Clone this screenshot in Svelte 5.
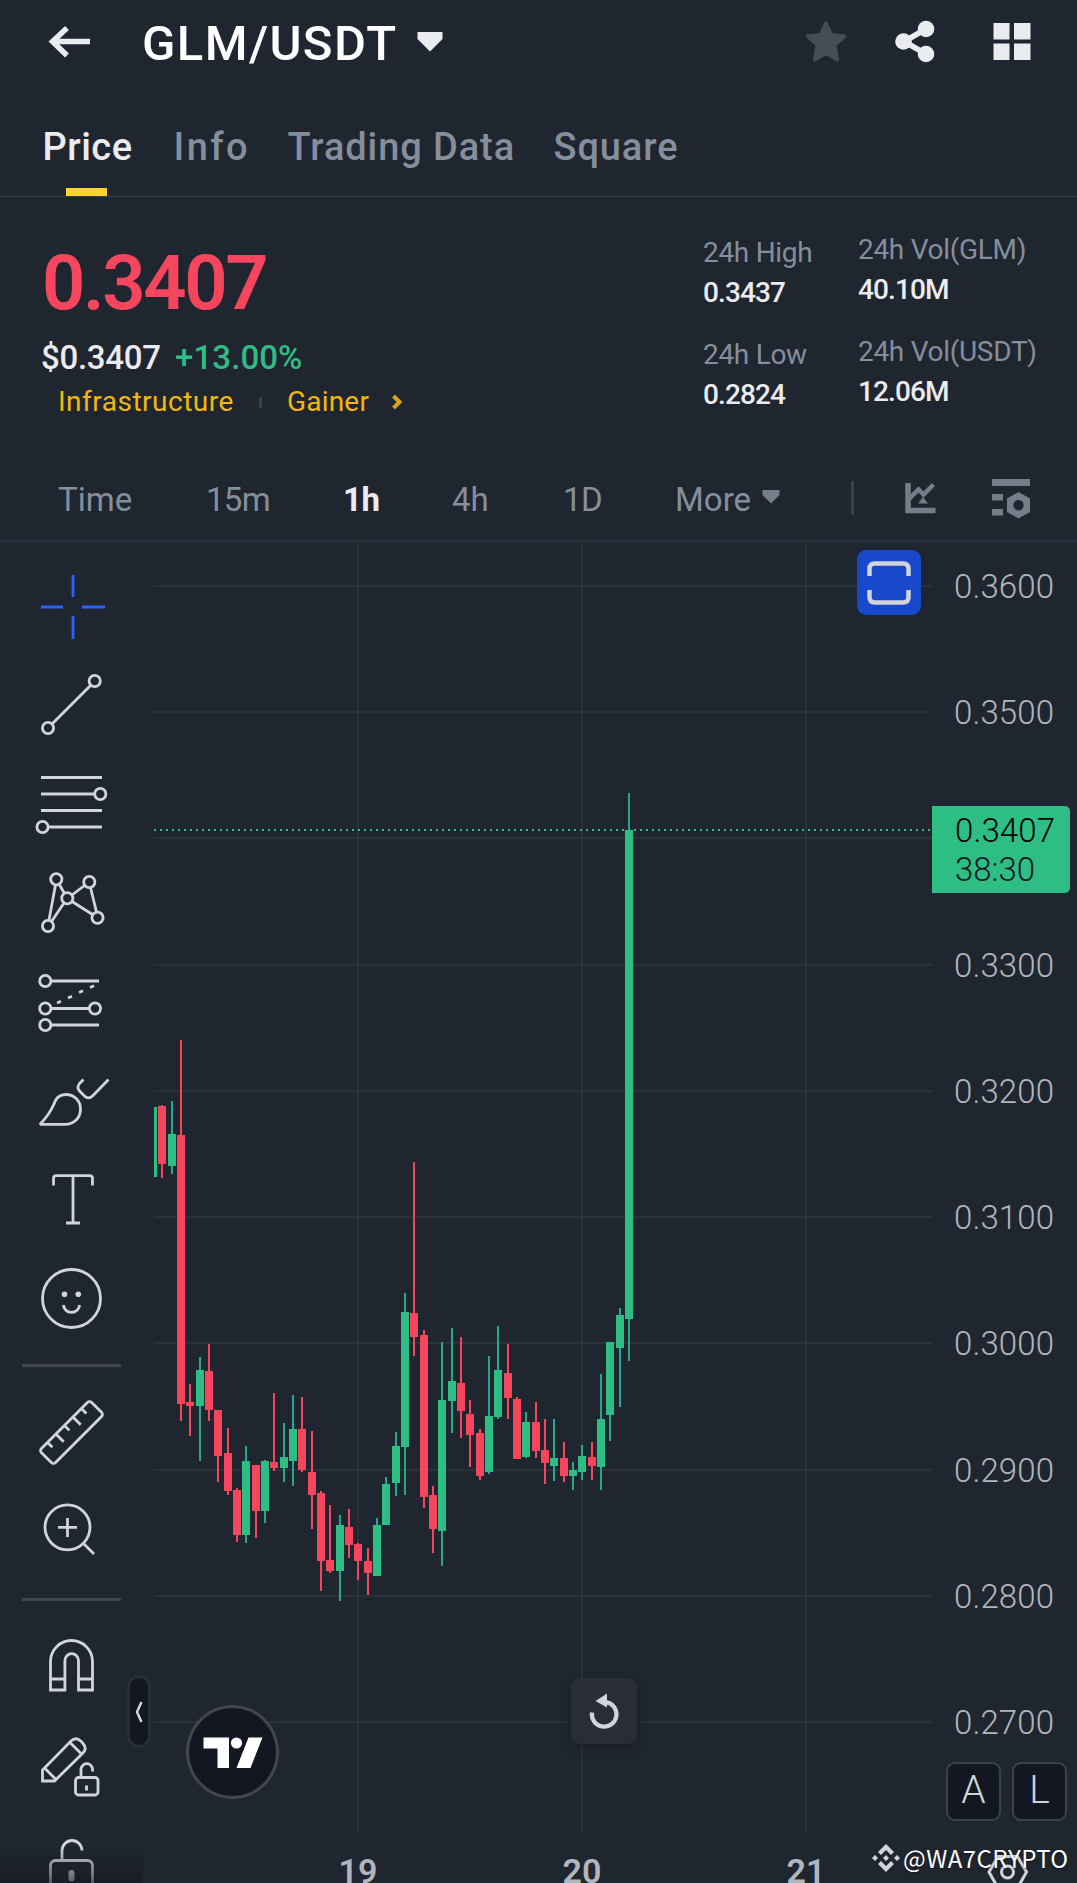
<script lang="ts">
  type Candle = [dir: 'up' | 'down', high: number, top: number, bottom: number, low: number];

  const tabs = ['Price', 'Info', 'Trading Data', 'Square'];
  const intervals = ['Time', '15m', '1h', '4h', '1D', 'More'];
  const stats = [
    [{ label: '24h High', value: '0.3437' }, { label: '24h Low', value: '0.2824' }],
    [{ label: '24h Vol(GLM)', value: '40.10M' }, { label: '24h Vol(USDT)', value: '12.06M' }],
  ];

  let tab = $state('Price');
  let interval = $state('1h');

  // price axis: one step of 0.01 is 126.22px
  const STEP = 126.22;
  const rows = ['0.3600', '0.3500', '0.3400', '0.3300', '0.3200', '0.3100', '0.3000', '0.2900', '0.2800', '0.2700']
    .map((label, i) => ({ label, y: Math.round(586 + i * STEP) }));
  const days = [{ label: '19', x: 358 }, { label: '20', x: 582 }, { label: '21', x: 806 }];

  // hourly bars, 24 to a day column; index 22 is on the "19" line
  const candles: Candle[] = [
    ['up', 1107, 1107, 1177, 1177], ['down', 1105, 1106, 1164, 1178], ['up', 1101, 1134, 1166, 1174],
    ['down', 1040, 1135, 1404, 1421], ['down', 1384, 1402, 1406, 1436], ['up', 1357, 1370, 1406, 1461],
    ['down', 1344, 1371, 1410, 1421], ['down', 1410, 1410, 1456, 1482], ['down', 1428, 1453, 1491, 1495],
    ['down', 1488, 1490, 1535, 1542], ['up', 1446, 1461, 1535, 1543], ['down', 1465, 1465, 1511, 1538],
    ['up', 1460, 1461, 1511, 1523], ['down', 1393, 1462, 1468, 1471], ['up', 1423, 1457, 1468, 1482],
    ['up', 1395, 1429, 1461, 1486], ['down', 1397, 1429, 1470, 1472], ['down', 1431, 1472, 1495, 1529],
    ['down', 1491, 1493, 1561, 1591], ['down', 1505, 1560, 1571, 1573], ['up', 1515, 1525, 1571, 1601],
    ['down', 1509, 1527, 1545, 1558], ['down', 1543, 1544, 1561, 1580], ['down', 1548, 1561, 1573, 1595],
    ['up', 1518, 1525, 1576, 1576], ['up', 1477, 1484, 1525, 1525], ['up', 1432, 1446, 1483, 1496],
    ['up', 1293, 1312, 1447, 1495], ['down', 1162, 1313, 1337, 1356], ['down', 1330, 1335, 1497, 1508],
    ['down', 1486, 1495, 1529, 1553], ['up', 1342, 1400, 1531, 1566], ['up', 1328, 1381, 1401, 1433],
    ['down', 1337, 1383, 1411, 1438], ['down', 1400, 1414, 1435, 1467], ['down', 1429, 1433, 1476, 1480],
    ['up', 1356, 1416, 1472, 1474], ['up', 1326, 1370, 1417, 1419], ['down', 1344, 1373, 1398, 1419],
    ['down', 1397, 1399, 1459, 1459], ['up', 1412, 1422, 1457, 1458], ['down', 1402, 1422, 1451, 1458],
    ['down', 1419, 1450, 1463, 1484], ['up', 1419, 1458, 1466, 1481], ['down', 1442, 1458, 1476, 1482],
    ['up', 1462, 1470, 1476, 1490], ['up', 1445, 1456, 1472, 1480], ['down', 1442, 1457, 1466, 1480],
    ['up', 1374, 1419, 1467, 1490], ['up', 1342, 1342, 1415, 1441], ['up', 1308, 1315, 1348, 1407],
    ['up', 793, 830, 1319, 1361],
  ];
  const barX = (i: number) => Math.ceil(358 + ((i - 22) * 28) / 3 - 0.01);
</script>

<div class="app">
  <header>
    <svg class="back" width="110" height="88"><path d="M67 28 52.5 41.5 67 55.5M53 41.5H90" /></svg>
    <h1>GLM/USDT</h1>
    <svg class="caret" width="26" height="88"><path d="M.5 32h25v7L13 51.5.5 39z" /></svg>
    <div class="actions">
      <svg width="42" height="88">
        <path class="star" d="M21 23.5 26.2 35 39 36.2 29.3 45.2 32.2 59.5 21 52.8 9.8 59.5 12.7 45.2 3 36.2 15.8 35z" />
      </svg>
      <svg width="40" height="88">
        <path d="M31 29 9 41.5 31 54" fill="none" stroke="#eaecef" stroke-width="5.5" />
        <circle cx="31" cy="29" r="8.3" /><circle cx="8.5" cy="41.5" r="8.3" /><circle cx="31" cy="54" r="8.3" />
      </svg>
      <svg width="38" height="88">
        <path d="M.5 23h16v16.5h-16zM21 23h16.5v16.5h-16.5zM.5 43.5h16v16.5h-16zM21 43.5h16.5v16.5h-16.5z" />
      </svg>
    </div>
  </header>

  <nav class="tabs">
    {#each tabs as name}
      <button class:active={tab === name} onclick={() => (tab = name)}>{name}</button>
    {/each}
  </nav>

  <section class="ticker">
    <div class="quote">
      <div class="price">0.3407</div>
      <div class="sub"><span class="usd">$0.3407</span><span class="change">+13.00%</span></div>
      <div class="tags">
        <span class="infra">Infrastructure</span>
        <i></i>
        <span class="gainer">Gainer</span>
        <svg width="12" height="16"><path d="M2.5 2 8.5 8 2.5 14" /></svg>
      </div>
    </div>
    {#each stats as column, i}
      <dl class:wide={i === 1}>
        {#each column as { label, value }}
          <div><dt>{label}</dt><dd>{value}</dd></div>
        {/each}
      </dl>
    {/each}
  </section>

  <nav class="intervals">
    {#each intervals as name}
      <button class:active={interval === name} onclick={() => (interval = name)}>
        {name}
        {#if name === 'More'}<svg width="18" height="14"><path d="M.5 0h17v5L9 13.5.5 5z" /></svg>{/if}
      </button>
    {/each}
    <i></i>
    <svg class="indicator" width="31" height="32">
      <path d="M3 1V28.5H30.5" stroke-width="5.5" />
      <path d="M4 17 13.5 7.5 18.5 12.5 28.5 2.5" stroke-width="4.5" />
      <path class="solid" d="M18 15 23 21.5H13z" />
    </svg>
    <svg class="settings" width="39" height="40">
      <path d="M0 0h38v7H0zM0 15h11v6.5H0zM0 30h11v6.5H0z" />
      <path fill-rule="evenodd" d="M26.5 13 38 19.5V33L26.5 39.5 15 33V19.5zM26.5 21a5.2 5.2 0 1 0 0 10.4 5.2 5.2 0 0 0 0-10.4z" />
    </svg>
  </nav>

  <main>
    <aside>
      <svg class="cross"><path d="M73 17V39M73 58V81M41 49H63M82 49H105" /></svg>
      <svg><path d="M52.5 66.5 90.5 28.5" /><circle cx="94.7" cy="24" r="5.6" /><circle cx="48" cy="71" r="5.6" /></svg>
      <svg>
        <path d="M41 21.5H102M41 38H94.5M41 54.5H102M48.5 71H102" />
        <circle cx="100.3" cy="38" r="5.6" /><circle cx="42.5" cy="71" r="5.6" />
      </svg>
      <svg>
        <path d="M55.5 30 49 65M59 29 64.5 38.5M72 40 84.5 30.5M90.5 32.5 96.5 57M72 46.5 92.5 59.5M64 48 51.5 66.5" />
        <circle cx="56.3" cy="24.3" r="5.6" /><circle cx="89.3" cy="27" r="5.6" /><circle cx="67.3" cy="43.3" r="5.6" />
        <circle cx="97.5" cy="62.7" r="5.6" /><circle cx="48" cy="71" r="5.6" />
      </svg>
      <svg>
        <path d="M51 27H99M51 54.5H89.5M51 71H99" />
        <path d="M57 49 61 47.3M68 44 72 42.3M79 38.5 83 36.8M90 33.5 94 31.8" />
        <circle cx="45.3" cy="27" r="5.6" /><circle cx="45.3" cy="54.5" r="5.6" />
        <circle cx="95" cy="54.5" r="5.6" /><circle cx="45.3" cy="71" r="5.6" />
      </svg>
      <svg>
        <path stroke-linejoin="bevel" d="M40 71.3C46 65 50 60 53.5 52 55.5 45 59.5 41.5 66 41.5 74.5 41.5 80.5 48 80.5 56 80.5 65 74 71.3 65 71.3Z" />
        <path d="M108.5 26.5 93 42.5C90 45.5 87 45.5 84.5 43L80 38.5C77.5 36 77.5 33 79.5 30.5L83.5 26.5" />
      </svg>
      <svg><path d="M53.5 33.5V26.5Q53.5 23.7 56.5 23.7H89.5Q92.5 23.7 92.5 26.5V33.5M73 23.7V71M66 71H80" /></svg>
      <svg>
        <circle cx="71.5" cy="47.5" r="29" /><path d="M63.5 54A8 7.3 0 0 0 79.5 54" />
        <circle class="dot" cx="64.5" cy="43.3" r="2.8" /><circle class="dot" cx="78.3" cy="43.3" r="2.8" />
      </svg>
      <hr />
      <svg>
        <g transform="translate(71.5 49.5) rotate(-45)">
          <rect x="-35.5" y="-10" width="71" height="20" rx="3" />
          <path d="M-24-10v7M-12-10V1M0-10v7M12-10V1M24-10v7" />
        </g>
      </svg>
      <svg><circle cx="67.5" cy="45.3" r="22.5" /><path d="M58 45.3H77M67.5 36V55M83.5 61.5 94 72" /></svg>
      <hr />
      <svg>
        <path d="M50.500 73V44.500a21 21 0 0 1 42 0V73H78.500V43.500a6.800 6.800 0 0 0-13.600 0V73zM50.500 62H65M78.500 62H92.500" />
      </svg>
      <svg>
        <path d="M42.5 65V54L71 25Q76 20.5 81 25.2L83 27.5Q87.5 32.5 83 37L54.5 65zM45 52.5 56 63.5M70 26.5 81.5 38" />
        <path d="M81 61V53.5a5.8 5.8 0 0 1 11.6 0V55.5M86.5 69.5V74.5" />
        <rect x="75.5" y="61.5" width="22.5" height="17.5" rx="3" />
      </svg>
      <svg class="last">
        <path d="M62 45V35.5a10 10 0 0 1 20 0" /><rect x="50.5" y="45.5" width="42" height="36" rx="5" />
        <path d="M71.5 58V63.5" stroke-width="6" stroke-linecap="round" />
      </svg>
      <div class="fade"></div>
    </aside>

    <div class="chart">
      <svg width="949" height="1344" viewBox="128 539 949 1344">
        <g class="grid">
          {#each rows as { y }}<rect x="154" y={y - 1} width="778" height="2" />{/each}
          {#each days as { x }}<rect x={x - 1} y="540" width="2" height="1292" />{/each}
        </g>
        <line class="last-price" x1="154" x2="932" y1="830" y2="830" />
        <clipPath id="plot"><rect x="154" y="539" width="778" height="1293" /></clipPath>
        <g clip-path="url(#plot)">
          {#each candles as [dir, high, top, bottom, low], i}
            <g class={dir}>
              <rect class="wick" x={barX(i) - 1} y={high} width="2" height={low - high} />
              <rect x={barX(i) - 4} y={top} width="8" height={bottom - top} />
            </g>
          {/each}
        </g>
        <g class="axis">
          {#each rows as { label, y }}
            {#if label !== '0.3400'}<text x="954" y={y + 12.4} textLength="100">{label}</text>{/if}
          {/each}
          {#each days as { label, x }}<text class="day" {x} y="1883">{label}</text>{/each}
        </g>
        <path class="tag" d="M932 806H1065a5 5 0 0 1 5 5V888a5 5 0 0 1-5 5H932z" />
        <text class="tag-price" x="955" y="842" textLength="100">0.3407</text>
        <text class="tag-time" x="955" y="881" textLength="80">38:30</text>
        <g class="hex"><path d="M998 1856.500H1017.500L1026.500 1872 1017.500 1888H998L989 1872z" /><circle cx="1007.500" cy="1872" r="6" /></g>
      </svg>

      <button class="fullscreen" aria-label="Full screen">
        <svg width="44" height="44"><path d="M2.5 15V8Q2.5 2.5 8 2.5H36Q41.5 2.5 41.5 8V15M2.5 29V36Q2.5 41.5 8 41.5H36Q41.5 41.5 41.5 36V29" /></svg>
      </button>
      <button class="collapse" aria-label="Hide toolbar">
        <svg width="8" height="22"><path d="M6.5 1 2 11 6.5 21" /></svg>
      </button>
      <div class="tv">
        <svg width="60" height="32"><path d="M.5.5H26V31H14.5V11.5H.5zM45.5.5H59.5L47.5 31H33.5z" /><circle cx="33.5" cy="6" r="5.6" /></svg>
      </div>
      <button class="reset" aria-label="Reset chart">
        <svg width="32" height="40"><path d="M4 20.5A12.3 12.3 0 1 0 18 10.2" /><path class="head" d="M7.5 9 19 1.5V15.5z" /></svg>
      </button>
      <div class="scale"><button>A</button><button>L</button></div>
      <div class="handle">
        <svg width="28" height="28" viewBox="0 0 28 28">
          <path d="M14 0 22 8 19 11 14 6 9 11 6 8zM14 28 22 20 19 17 14 22 9 17 6 20zM14 11 17 14 14 17 11 14zM3 11 6 14 3 17 0 14zM25 11 28 14 25 17 22 14z" />
        </svg>
        <span>@WA7CRYPTO</span>
      </div>
    </div>
  </main>
</div>

<style>
  :global(body){margin:0;background:#202630}
  .app{width:1077px;height:1883px;overflow:hidden;display:flex;flex-direction:column;background:#202630;color:#eaecef;font-family:Roboto,"Noto Sans",sans-serif}
  button{padding:0;border:0;background:none;color:inherit;font:inherit;letter-spacing:inherit;text-align:left}
  svg{display:block;flex:none;fill:#eaecef}

  header{display:flex;height:88px}
  .back{margin-right:32px}
  .back path{fill:none;stroke:#eaecef;stroke-width:5.5}
  h1{width:275px;margin:0;color:#fff;font-size:49px;font-weight:500;line-height:88px;letter-spacing:1.4px}
  .actions{display:flex;gap:48px;margin-left:362px}
  .actions svg:last-child{margin-left:10px}
  .star{fill:#474d57;stroke:#474d57;stroke-width:4;stroke-linejoin:round}

  .tabs{display:flex;box-sizing:border-box;height:109px;padding:10px 0 0 42.5px;border-bottom:1px solid #3a414b;color:#848e9c;font-size:38px;font-weight:500;line-height:98px;letter-spacing:.9px}
  .tabs button{position:relative;width:131px}
  .tabs button:nth-child(2){width:114px;letter-spacing:2.4px}
  .tabs button:nth-child(3){width:266px}
  .tabs button:first-child{letter-spacing:.5px}
  .tabs .active{color:#eaecef}
  .tabs .active::after{content:"";position:absolute;left:23.500px;bottom:0;width:41px;height:8px;background:#fcd535}

  .ticker{display:flex;height:263px}
  .quote{width:661px;padding:40px 0 0 42px}
  .price{height:92px;color:#f6465d;font-size:76px;font-weight:600;line-height:92px;letter-spacing:-2.4px}
  .sub{display:flex;margin-top:9px;font-size:33px;font-weight:500;line-height:40px}
  .usd{width:134px;margin-left:-1px;letter-spacing:-.3px}
  .change{color:#2ebd85;letter-spacing:.1px}
  .tags{display:flex;align-items:center;margin:4px 0 0 16px;color:#f0b90b;font-size:28px;line-height:40px}
  .infra{width:201px;letter-spacing:.5px}
  .tags i{width:3px;height:11px;margin-right:25px;background:#3a414b}
  .gainer{width:104px;letter-spacing:.2px}
  .tags path{fill:none;stroke:#d9a514;stroke-width:4}
  dl{display:flex;flex-direction:column;gap:22px;width:155px;margin:36px 0 0;font-size:28px;line-height:40px;white-space:nowrap;letter-spacing:-.3px}
  dl.wide{margin-top:33px}
  dt{color:#848e9c}
  dd{margin:0;font-weight:500;letter-spacing:-.9px}

  .intervals{display:flex;align-items:center;box-sizing:border-box;height:79px;padding-left:58px;color:#848e9c;font-size:33px}
  .intervals button{width:148px}
  .intervals button:nth-child(2){width:137px;letter-spacing:-.7px}
  .intervals button:nth-child(3){width:109px;letter-spacing:-.5px}
  .intervals button:nth-child(4){width:111px}
  .intervals button:nth-child(5){width:112px;letter-spacing:-.5px}
  .intervals button:nth-child(6){display:flex;align-items:center;justify-content:space-between;width:105px;margin-right:71px}
  .intervals .active{color:#eaecef;font-weight:700}
  .intervals svg{fill:#767c88}
  .intervals button svg{margin-top:-5px}
  .intervals i{width:3px;height:34px;margin:-4px 51px 0 0;background:#3a414b}
  .indicator{margin:-4px 56px 0 0}
  .indicator path{fill:none;stroke:#767c88}
  .indicator .solid{fill:#767c88;stroke:none}
  .settings{margin-top:-2px}

  main{display:flex;box-sizing:border-box;height:1344px;background:linear-gradient(#262c37 4px,transparent 4px)}
  aside{position:relative;width:128px;height:1325px;padding-top:19px}
  aside svg{width:128px;height:99px;fill:none;stroke:#d1d4dc;stroke-width:2.8}
  aside .last{height:68px}
  aside .cross{stroke:#2962ff}
  aside .dot{fill:#d1d4dc;stroke:none}
  hr{width:99px;height:3px;margin:14px 0 16px 22px;border:0;background:#434651}
  hr:nth-of-type(2){margin:17px 0 16px 22px}
  .fade{position:absolute;left:0;bottom:0;width:143px;height:38px;background:linear-gradient(transparent,#131722a0)}

  .chart{position:relative;width:949px}
  .grid{fill:#2b313b}
  .last-price{stroke:#2ebd85;stroke-width:2;stroke-dasharray:2 4}
  .up{fill:#2ebd85}
  .up .wick{fill:#26a68c}
  .down{fill:#f6465d}
  .axis{fill:#b2b5be;font-size:33px;font-weight:300}
  .day{font-size:34px;font-weight:600;text-anchor:middle}
  .tag{fill:#2ebd85}
  .tag-price,.tag-time{fill:#000;font-size:33px;font-weight:300}
  .tag-time{fill:#131722}
  .hex{fill:none;stroke:#d1d4dc;stroke-width:3}
  .chart button,.tv{display:flex;align-items:center;justify-content:center;box-sizing:border-box}
  .chart button path{fill:none;stroke:#d1d4dc}
  .fullscreen,.collapse,.tv,.reset,.scale,.handle{position:absolute}
  .fullscreen{left:729px;top:11px;width:64px;height:65px;border-radius:9px;background:#1848cc}
  .fullscreen path{stroke-width:4.5}
  .collapse{left:-1px;top:1136px;width:24px;height:73px;border:3px solid #282d38;border-radius:12px;background:#131722}
  .collapse path{stroke-width:2.5}
  .tv{left:58px;top:1166px;width:93px;height:94px;border:3px solid #434651;border-radius:50%;background:#131722}
  .tv svg{margin-top:2px;fill:#fff}
  .reset{left:443px;top:1139px;width:66px;height:66px;border-radius:10px;background:#282d38;box-shadow:0 4px 10px #131722a0}
  .reset svg{margin-top:2px}
  .reset path{stroke-width:4.2}
  .reset .head{fill:#d1d4dc;stroke:none}
  .scale{left:818px;top:1223px;display:flex;gap:11px}
  .scale button{width:55px;height:59px;padding-bottom:2px;border:2px solid #3b414c;border-radius:9px;background:#131722;color:#d1d4dc;font-size:39px;font-weight:300;line-height:55px}
  .handle{left:744px;top:1299px;display:flex;align-items:center;gap:3px;color:#fff;font-family:"Noto Sans CJK SC","Noto Sans",sans-serif;font-size:24px;line-height:40px;letter-spacing:.45px;text-shadow:0 1px 2px #0008}
  .handle svg{fill:#d1d4dc}
</style>
